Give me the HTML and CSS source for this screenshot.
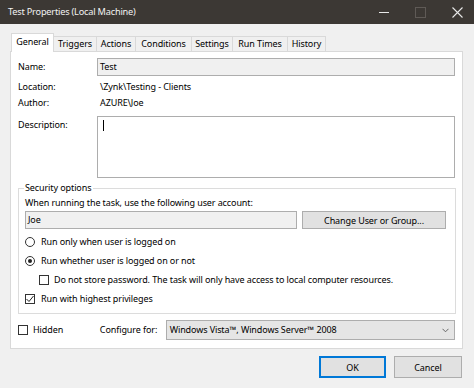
FILE: index.html
```html
<!DOCTYPE html>
<html lang="en">
<head>
    <meta charset="UTF-8">
    <title>Test Properties (Local Machine)</title>
    <link rel="stylesheet" href="styles.css">
</head>
<body>
    <div class="window">
        <div class="titlebar">
            <span class="title">Test Properties (Local Machine)</span>
            <div class="controls">
                <span class="ctl ctl-min"></span>
                <span class="ctl ctl-max"></span>
                <span class="ctl ctl-close">
                    <svg width="11" height="11" viewBox="0 0 11 11"><path d="M0.5 0.5 L10.5 10.5 M10.5 0.5 L0.5 10.5" stroke="#e8e8e8" stroke-width="1.1"/></svg>
                </span>
            </div>
        </div>

        <div class="dialog">
            <div class="tabs">
                <div class="tab active" style="width: 43px">General</div>
                <div class="tab" style="width: 43px">Triggers</div>
                <div class="tab" style="width: 39px">Actions</div>
                <div class="tab" style="width: 56px">Conditions</div>
                <div class="tab" style="width: 41px">Settings</div>
                <div class="tab" style="width: 55px">Run Times</div>
                <div class="tab" style="width: 38px">History</div>
            </div>

            <div class="panel">
                <div class="field-row">
                    <span class="label">Name:</span>
                    <div class="input readonly">Test</div>
                </div>
                <div class="field-row text-row">
                    <span class="label">Location:</span>
                    <span class="value">\Zynk\Testing - Clients</span>
                </div>
                <div class="field-row text-row author-row">
                    <span class="label">Author:</span>
                    <span class="value">AZURE\Joe</span>
                </div>
                <div class="field-row desc-row">
                    <span class="label">Description:</span>
                    <div class="textarea"><span class="caret"></span></div>
                </div>

                <div class="group">
                    <span class="legend">Security options</span>
                    <p class="group-text">When running the task, use the following user account:</p>
                    <div class="account-row">
                        <div class="input readonly account">Joe</div>
                        <button class="btn change-btn">Change User or Group...</button>
                    </div>
                    <label class="option first">
                        <span class="radio"></span>
                        Run only when user is logged on
                    </label>
                    <label class="option">
                        <span class="radio checked"></span>
                        Run whether user is logged on or not
                    </label>
                    <label class="option sub-option">
                        <span class="check"></span>
                        Do not store password. The task will only have access to local computer resources.
                    </label>
                    <label class="option">
                        <span class="check">
                            <svg width="8" height="8" viewBox="0 0 8 8"><path d="M0.5 4 L3 6.5 L7.5 1" fill="none" stroke="#222" stroke-width="1"/></svg>
                        </span>
                        Run with highest privileges
                    </label>
                </div>

                <div class="bottom-row">
                    <label class="option hidden-opt">
                        <span class="check"></span>
                        Hidden
                    </label>
                    <span class="configure-label">Configure for:</span>
                    <div class="select">
                        <span>Windows Vista™, Windows Server™ 2008</span>
                        <svg width="7" height="5" viewBox="0 0 7 5"><path d="M0.5 0.8 L3.5 3.8 L6.5 0.8" fill="none" stroke="#666" stroke-width="1"/></svg>
                    </div>
                </div>
            </div>

            <div class="actions">
                <button class="btn ok-btn">OK</button>
                <button class="btn cancel-btn">Cancel</button>
            </div>
        </div>
    </div>
</body>
</html>
```

FILE: styles.css
```css
* {
    margin: 0;
    padding: 0;
    box-sizing: border-box;
}

body {
    font-family: "Segoe UI", "Noto Sans", sans-serif;
    font-size: 9px;
    line-height: 14px;
    letter-spacing: -0.1px;
    color: #000;
    background: #f0f0f0;
    width: 474px;
    height: 388px;
    overflow: hidden;
    white-space: nowrap;
}

.window {
    width: 474px;
    height: 388px;
    background: #f0f0f0;
}

.titlebar {
    height: 24px;
    background: #3c3834;
    display: flex;
    align-items: center;
    justify-content: space-between;
    padding-left: 8px;
}

.title {
    color: #f2f2f2;
    font-size: 9.2px;
    letter-spacing: -0.2px;
}

.controls {
    display: flex;
    height: 100%;
}

.ctl {
    width: 36px;
    height: 100%;
    display: flex;
    align-items: center;
    justify-content: center;
}

.ctl-min::before {
    content: "";
    width: 10px;
    height: 1px;
    background: #e8e8e8;
}

.ctl-max::before {
    content: "";
    width: 9px;
    height: 9px;
    border: 1px solid #5f5a56;
}

.ctl-close svg {
    margin-left: 2px;
}

.dialog {
    padding: 9px 10px 0 10px;
}

/* tabs */
.tabs {
    display: flex;
    align-items: flex-end;
    height: 18px;
    padding-left: 1px;
    position: relative;
    z-index: 1;
}

.tab {
    height: 15px;
    line-height: 14px;
    text-align: center;
    border: 1px solid #d9d9d9;
    border-bottom: none;
    border-left: none;
    background: #f0f0f0;
}

.tab.active {
    height: 19px;
    line-height: 16px;
    background: #fff;
    border-left: 1px solid #d9d9d9;
    margin-bottom: -1px;
}

.panel {
    width: 453px;
    height: 298px;
    background: #fff;
    border: 1px solid #d9d9d9;
    padding: 6px 7px 0 7px;
}

.field-row {
    display: flex;
    align-items: center;
}

.label {
    width: 79px;
    flex-shrink: 0;
}

.input {
    height: 18px;
    border: 1px solid #adadad;
    line-height: 16px;
    padding-left: 2px;
    background: #fff;
}

.readonly {
    background: #f0f0f0;
}

.field-row .input {
    width: 359px;
}

.text-row {
    height: 14px;
    margin-top: 4px;
}

.author-row {
    margin-top: 2px;
}

.text-row .value {
    padding-left: 3px;
}

.desc-row {
    align-items: flex-start;
    margin-top: 6px;
}

.desc-row .label {
    padding-top: 2px;
}

.textarea {
    width: 359px;
    height: 62px;
    border: 1px solid #adadad;
    padding: 3px 0 0 5px;
}

.caret {
    display: block;
    width: 1px;
    height: 11px;
    background: #000;
}

/* security group */
.group {
    position: relative;
    border: 1px solid #dcdcdc;
    margin-top: 10px;
    width: 438px;
    height: 126px;
    padding: 7px 0 0 6px;
}

.legend {
    position: absolute;
    top: -8px;
    left: 5px;
    padding: 0 2px 0 1px;
    background: #fff;
}

.account-row {
    display: flex;
    margin-top: 1px;
}

.account {
    width: 272px;
}

.btn {
    font-family: inherit;
    font-size: 9px;
    letter-spacing: -0.1px;
    color: #000;
    background: #e1e1e1;
    border: 1px solid #adadad;
}

.change-btn {
    width: 144px;
    height: 18px;
    margin-left: 5px;
}

.option {
    display: flex;
    align-items: center;
    height: 14px;
    margin-top: 5px;
}

.option.first {
    margin-top: 6px;
}

.radio {
    width: 10px;
    height: 10px;
    border: 1px solid #333;
    border-radius: 50%;
    display: flex;
    align-items: center;
    justify-content: center;
    margin-right: 6px;
}

.radio.checked::after {
    content: "";
    width: 4px;
    height: 4px;
    border-radius: 50%;
    background: #222;
}

.check {
    width: 10px;
    height: 10px;
    border: 1px solid #333;
    display: flex;
    align-items: center;
    justify-content: center;
    margin-right: 6px;
    background: #fff;
}

.sub-option {
    margin-left: 14px;
}

.sub-option .check {
    margin-right: 5px;
}

/* bottom row */
.bottom-row {
    display: flex;
    align-items: center;
    margin-top: 6px;
    height: 20px;
}

.hidden-opt {
    margin-top: 0;
    width: 82px;
}

.hidden-opt .check {
    margin-right: 5px;
}

.configure-label {
    width: 66px;
}

.select {
    width: 290px;
    height: 20px;
    border: 1px solid #adadad;
    background: #e5e5e5;
    display: flex;
    align-items: center;
    justify-content: space-between;
    padding: 0 5px 0 3px;
}

/* dialog buttons */
.actions {
    display: flex;
    justify-content: flex-end;
    gap: 8px;
    padding: 7px 2px 0 0;
}

.ok-btn,
.cancel-btn {
    width: 67px;
    height: 22px;
}

.cancel-btn {
    width: 68px;
}

.ok-btn {
    border: 1px solid #0078d7;
    box-shadow: inset 0 0 0 1px #0078d7;
}
```
